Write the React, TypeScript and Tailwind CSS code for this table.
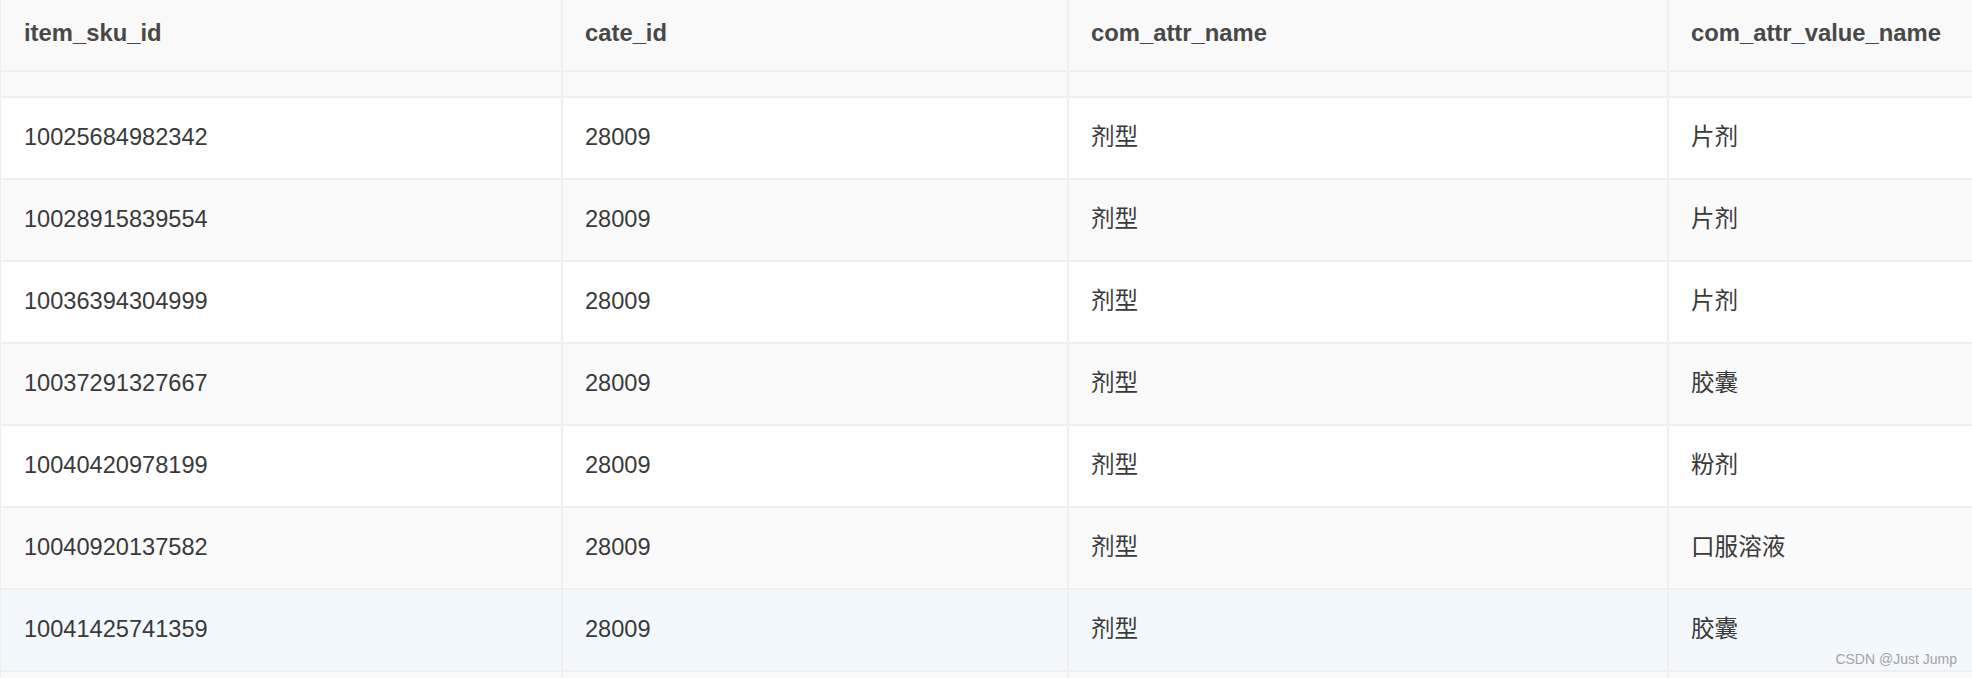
const rows = [
  { sku: '10025684982342', cate: '28009', name: '剂型', value: '片剂' },
  { sku: '10028915839554', cate: '28009', name: '剂型', value: '片剂' },
  { sku: '10036394304999', cate: '28009', name: '剂型', value: '片剂' },
  { sku: '10037291327667', cate: '28009', name: '剂型', value: '胶囊' },
  { sku: '10040420978199', cate: '28009', name: '剂型', value: '粉剂' },
  { sku: '10040920137582', cate: '28009', name: '剂型', value: '口服溶液' },
  { sku: '10041425741359', cate: '28009', name: '剂型', value: '胶囊' },
];

const cols = 'grid grid-cols-[561px_506px_600px_1fr]';
const cell = 'flex items-center pl-[22px] border-l-2 border-[#efefef] first:border-l first:pl-[23px]';

function Row({ cells, className }: { cells: string[]; className: string }) {
  return (
    <div className={`${cols} ${className} border-b-2 border-[#efefef]`}>
      {cells.map((c, i) => (
        <div key={i} className={cell}>
          {c}
        </div>
      ))}
    </div>
  );
}

export default function App() {
  return (
    <div className="relative h-[678px] w-[1972px] overflow-hidden bg-white font-['Liberation_Sans','Noto_Sans_CJK_SC',sans-serif]">
      {/* header */}
      <div className={`${cols} h-[72px] border-b-2 border-[#ebeff7] bg-[#f9f9f9] text-[23.8px] font-bold text-[#484848]`}>
        {['item_sku_id', 'cate_id', 'com_attr_name', 'com_attr_value_name'].map((h) => (
          <div key={h} className={`${cell} pb-[4px]`}>
            {h}
          </div>
        ))}
      </div>
      <Row cells={['', '', '', '']} className="h-[26px] bg-[#fafafa]" />
      <div className="text-[23.6px] text-[#3a3a3a]">
        {rows.map((r, i) => (
          <Row
            key={r.sku}
            cells={[r.sku, r.cate, r.name, r.value]}
            className={`h-[82px] ${i === 6 ? 'bg-[#f3f8fd]' : i % 2 === 1 ? 'bg-[#fafafa]' : 'bg-white'}`}
          />
        ))}
        <Row cells={['', '', '', '']} className="h-[40px] bg-[#fafafa]" />
      </div>
      <div className="absolute right-[15px] top-[652px] text-[14px] leading-none text-[#a3a3a3] font-['Liberation_Sans',sans-serif]">
        CSDN @Just Jump
      </div>
    </div>
  );
}
